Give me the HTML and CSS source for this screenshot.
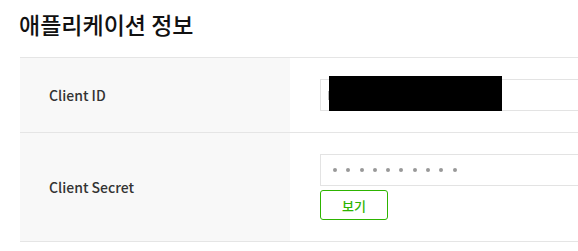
FILE: index.html
```html
<!DOCTYPE html>
<html>
<head>
	<title>애플리케이션 정보</title>
	<link rel="stylesheet" href="styles.css">
</head>
<body>

	<h3 class="title">애플리케이션 정보</h3>

	<div class="info">
		<div class="row row-id">
			<div class="label">Client ID</div>
			<div class="value">
				<div class="field">
					<span class="caret"></span>
					<i class="mask"></i>
				</div>
			</div>
		</div>
		<div class="row row-secret">
			<div class="label">Client Secret</div>
			<div class="value">
				<div class="field dots">
					<span></span><span></span><span></span><span></span><span></span>
					<span></span><span></span><span></span><span></span><span></span>
				</div>
				<button class="btn">보기</button>
			</div>
		</div>
	</div>

</body>
</html>
```

FILE: styles.css
```css
body{
	margin: 0;
	font-family: "Noto Sans CJK KR", "Noto Sans", sans-serif;
	color: #222;
	background-color: #fff;
	overflow: hidden;
}
.title{
	margin: 0;
	padding: 7px 0 0 19px;
	height: 57px;
	box-sizing: border-box;
	font-size: 23px;
	font-weight: 500;
	line-height: 34px;
	color: #111;
}
.info{
	margin-left: 20px;
	border-top: 1px solid #e5e5e5;
}
.row{
	display: flex;
	border-bottom: 1px solid #e5e5e5;
}
.row-id{
	height: 74px;
}
.row-secret{
	height: 108px;
}
.label{
	flex: 0 0 270px;
	display: flex;
	align-items: center;
	padding-left: 29px;
	box-sizing: border-box;
	background-color: #f8f8f8;
	font-size: 14px;
	font-weight: 500;
	color: #333;
}
.value{
	flex: 1;
	display: flex;
	flex-direction: column;
	justify-content: center;
	padding-left: 30px;
	min-width: 0;
	overflow: hidden;
}
.field{
	position: relative;
	flex: none;
	width: 400px;
	height: 32px;
	border: 1px solid #e3e3e3;
	box-sizing: border-box;
	display: flex;
	align-items: center;
}
.caret{
	width: 2px;
	height: 9px;
	margin-left: 7px;
	background-color: #bbb;
}
.mask{
	position: absolute;
	left: 8px;
	top: -4px;
	width: 173px;
	height: 35px;
	background-color: #000;
}
.dots{
	padding-left: 12px;
	gap: 9.3px;
}
.dots span{
	width: 4px;
	height: 4px;
	border-radius: 50%;
	background-color: #999;
}
.row-secret .value{
	justify-content: flex-start;
	padding-top: 21px;
}
.btn{
	margin-top: 4px;
	width: 68px;
	height: 30px;
	padding: 0;
	border: 1px solid #2db400;
	border-radius: 3px;
	background-color: #fff;
	color: #2db400;
	font-family: inherit;
	font-size: 13px;
	font-weight: 500;
}
```
